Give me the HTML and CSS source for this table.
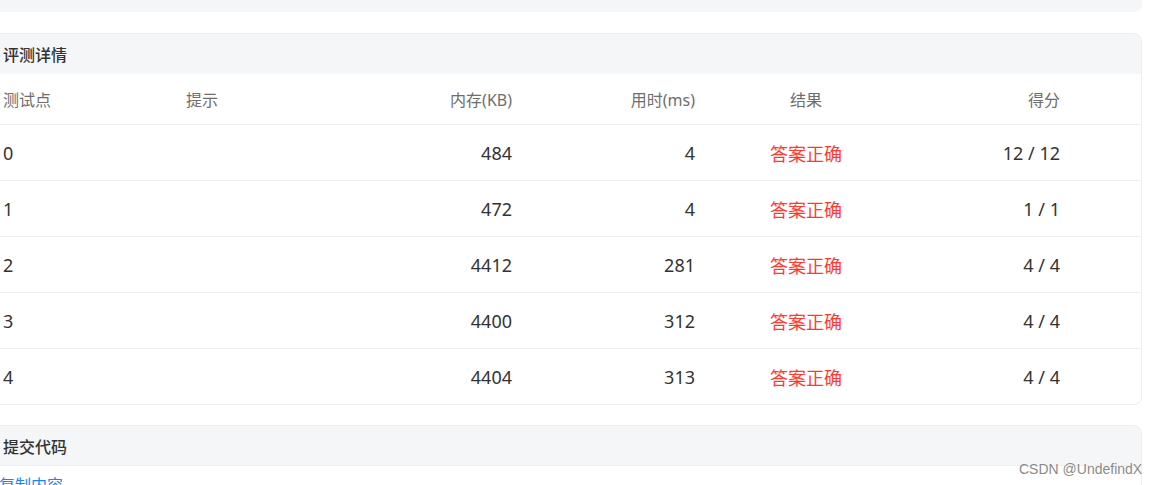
FILE: index.html
```html
<!DOCTYPE html>
<html lang="zh">
<head>
<meta charset="utf-8">
<title>评测详情</title>
<link rel="stylesheet" href="styles.css">
</head>
<body>
<div class="page">
  <div class="card-top"></div>

  <section class="card">
    <div class="card-head">评测详情</div>
    <div class="table">
      <div class="tr th">
        <div class="c c1">测试点</div>
        <div class="c c2">提示</div>
        <div class="c c3">内存(KB)</div>
        <div class="c c4">用时(ms)</div>
        <div class="c c5">结果</div>
        <div class="c c6">得分</div>
        <div class="c c7"></div>
      </div>
      <div class="tr">
        <div class="c c1">0</div><div class="c c2"></div><div class="c c3">484</div><div class="c c4">4</div><div class="c c5 ok">答案正确</div><div class="c c6">12 / 12</div><div class="c c7"></div>
      </div>
      <div class="tr">
        <div class="c c1">1</div><div class="c c2"></div><div class="c c3">472</div><div class="c c4">4</div><div class="c c5 ok">答案正确</div><div class="c c6">1 / 1</div><div class="c c7"></div>
      </div>
      <div class="tr">
        <div class="c c1">2</div><div class="c c2"></div><div class="c c3">4412</div><div class="c c4">281</div><div class="c c5 ok">答案正确</div><div class="c c6">4 / 4</div><div class="c c7"></div>
      </div>
      <div class="tr">
        <div class="c c1">3</div><div class="c c2"></div><div class="c c3">4400</div><div class="c c4">312</div><div class="c c5 ok">答案正确</div><div class="c c6">4 / 4</div><div class="c c7"></div>
      </div>
      <div class="tr last">
        <div class="c c1">4</div><div class="c c2"></div><div class="c c3">4404</div><div class="c c4">313</div><div class="c c5 ok">答案正确</div><div class="c c6">4 / 4</div><div class="c c7"></div>
      </div>
    </div>
  </section>

  <section class="card card-code">
    <div class="card-head head-line">提交代码</div>
    <div class="code-body"><a class="copy" href="#">复制内容</a></div>
  </section>
</div>
<div class="watermark">CSDN @UndefindX</div>
</body>
</html>
```

FILE: styles.css
```css
html, body {
  margin: 0;
  padding: 0;
  background: #ffffff;
  overflow: hidden;
  height: 485px;
}

body {
  font-family: "Noto Sans", "Noto Sans CJK SC", sans-serif;
  color: #333333;
  position: relative;
}

.page {
  margin-left: -14px;
  width: 1156px;
}

.card-top {
  margin-top: -20px;
  height: 32px;
  background: #f5f6f8;
  border-radius: 0 0 8px 8px;
}

.card {
  margin-top: 21px;
  border: 1px solid #ebeef3;
  border-radius: 8px;
  overflow: hidden;
  background: #ffffff;
}

.card-code {
  margin-top: 20px;
}

.card-head {
  height: 40px;
  box-sizing: border-box;
  background: #f5f6f8;
  padding: 0 16px;
  display: flex;
  align-items: center;
  font-size: 16px;
  font-weight: 500;
  color: #333333;
}

.head-line {
  height: 40px;
  border-bottom: 1px solid #ebeef3;
}

.table {
  display: flex;
  flex-direction: column;
}

.tr {
  display: grid;
  grid-template-columns: 183px 180px 178px 183px 190px 175px 1fr;
  height: 56px;
  box-sizing: border-box;
  border-bottom: 1px solid #ebeef3;
  align-items: center;
  font-size: 18px;
  color: #333333;
}

.tr.th {
  height: 51px;
  font-size: 16px;
  color: #6e6e6e;
}

.tr.last {
  height: 55px;
  border-bottom: none;
}

.c {
  padding: 0 16px;
  white-space: nowrap;
}

.c3, .c4, .c6 {
  text-align: right;
}

.c5 {
  text-align: center;
}

.ok {
  color: #ff3b30;
}

.code-body {
  padding: 6px 12px;
}

.copy {
  color: #1a86f0;
  text-decoration: none;
  font-size: 16px;
}

.watermark {
  position: absolute;
  left: 1019px;
  top: 461px;
  font-family: "Liberation Sans", Arial, sans-serif;
  font-size: 14px;
  color: #8a8a8a;
  white-space: nowrap;
}
```
